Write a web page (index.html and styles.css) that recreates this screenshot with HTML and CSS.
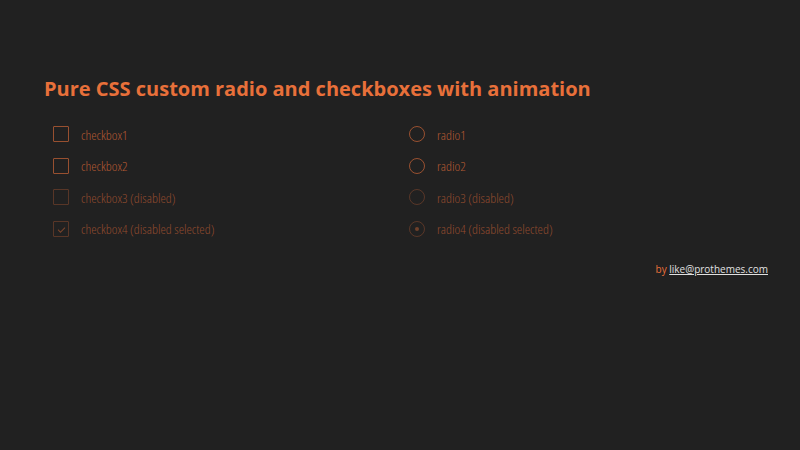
FILE: index.html
```html
<!DOCTYPE html>
<html lang="en">

<head>
    <meta charset="UTF-8">
    <meta name="viewport" content="width=device-width, initial-scale=1.0">
    <title>Pure CSS custom radio and checkboxes</title>
    <link rel="stylesheet" href="styles.css">
</head>

<body>
    <div class="wrapper">
        <h1>Pure CSS custom radio and checkboxes with animation</h1>

        <div class="columns">
            <!-- Checkboxes -->
            <div class="col">
                <label class="item">
                    <input type="checkbox">
                    <span class="box"></span>
                    <span class="text">checkbox1</span>
                </label>
                <label class="item">
                    <input type="checkbox">
                    <span class="box"></span>
                    <span class="text">checkbox2</span>
                </label>
                <label class="item disabled">
                    <input type="checkbox" disabled>
                    <span class="box"></span>
                    <span class="text">checkbox3 (disabled)</span>
                </label>
                <label class="item disabled">
                    <input type="checkbox" disabled checked>
                    <span class="box"></span>
                    <span class="text">checkbox4 (disabled selected)</span>
                </label>
            </div>

            <!-- Radios -->
            <div class="col">
                <label class="item">
                    <input type="radio" name="r">
                    <span class="box round"></span>
                    <span class="text">radio1</span>
                </label>
                <label class="item">
                    <input type="radio" name="r">
                    <span class="box round"></span>
                    <span class="text">radio2</span>
                </label>
                <label class="item disabled">
                    <input type="radio" name="r2" disabled>
                    <span class="box round"></span>
                    <span class="text">radio3 (disabled)</span>
                </label>
                <label class="item disabled">
                    <input type="radio" name="r2" disabled checked>
                    <span class="box round"></span>
                    <span class="text">radio4 (disabled selected)</span>
                </label>
            </div>
        </div>

        <p class="credit">by <a href="#">like@prothemes.com</a></p>
    </div>
</body>

</html>
```

FILE: styles.css
```css
body {
    margin: 0;
    background-color: #212121;
    font-family: "Open Sans", Arial, sans-serif;
    color: #e8703a;
}

.wrapper {
    padding: 75px 32px 0 44px;
}

h1 {
    margin: 0 0 24px;
    font-size: 20px;
    font-weight: 700;
    color: #e8703a;
}

.columns {
    display: grid;
    grid-template-columns: 356px 1fr;
}

.col {
    display: flex;
    flex-direction: column;
    gap: 15.6px;
}

.item {
    display: flex;
    align-items: center;
    gap: 12px;
    padding-left: 9px;
    height: 16px;
    cursor: pointer;
}

.item input {
    display: none;
}

/* caixa / círculo */
.box {
    width: 16px;
    height: 16px;
    box-sizing: border-box;
    border: 1.5px solid rgba(232, 112, 58, 0.6);
    border-radius: 1px;
    position: relative;
    transition: all 0.3s;
}

.box.round {
    border-radius: 50%;
}

.text {
    font-size: 13.6px;
    font-weight: 300;
    font-stretch: 75%;
    color: rgba(232, 112, 58, 0.72);
}

.disabled {
    cursor: default;
}

.disabled .box {
    border-width: 1px;
    border-color: rgba(232, 112, 58, 0.28);
}

.disabled .text {
    color: rgba(232, 112, 58, 0.55);
}

/* marca do checkbox selecionado */
.item input[type="checkbox"]:checked + .box::after {
    content: "";
    position: absolute;
    left: 4px;
    top: 2px;
    width: 6px;
    height: 3px;
    border-left: 1px solid rgba(232, 112, 58, 0.45);
    border-bottom: 1px solid rgba(232, 112, 58, 0.45);
    transform: translate(0, 3px) rotate(-45deg);
}

/* ponto do radio selecionado */
.item input[type="radio"]:checked + .box::after {
    content: "";
    position: absolute;
    left: 5px;
    top: 5px;
    width: 4px;
    height: 4px;
    border-radius: 50%;
    background-color: rgba(232, 112, 58, 0.4);
}

.credit {
    margin: 25px 0 0;
    text-align: right;
    font-size: 10px;
    color: #e8703a;
}

.credit a {
    color: #e0e0e0;
}
```
